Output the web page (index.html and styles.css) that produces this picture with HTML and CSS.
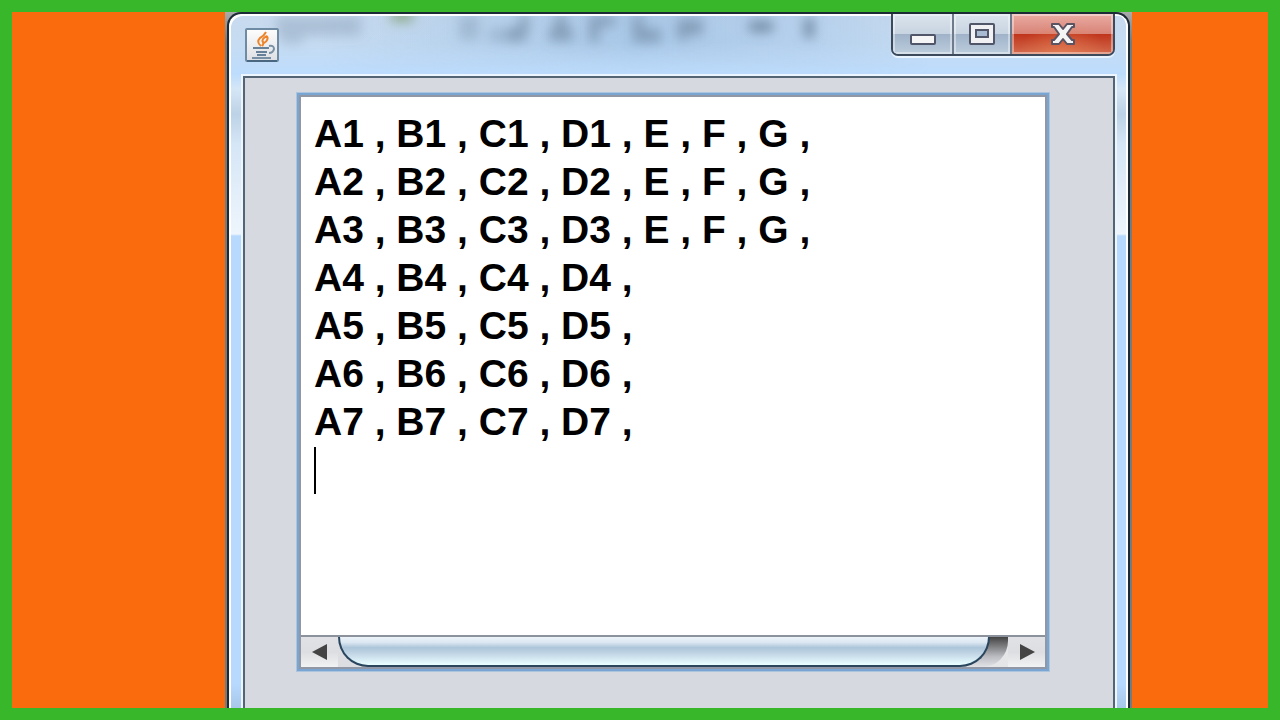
FILE: index.html
```html
<!DOCTYPE html>
<html lang="en">
<head>
<meta charset="utf-8">
<meta name="viewport" content="width=device-width, initial-scale=1">
<title>Text output</title>
<link rel="stylesheet" href="styles.css">
</head>
<body>
<main class="stage">
  <section class="shadow" aria-label="Java window">
    <div class="window">
      <header class="titlebar">
        <svg class="glass" width="640" height="62" viewBox="0 0 640 62" aria-hidden="true">
          <defs><filter id="soft" x="-20%" y="-50%" width="140%" height="200%"><feGaussianBlur stdDeviation="6"/></filter></defs>
          <g filter="url(#soft)" fill="#6a829c">
            <g opacity=".3"><rect x="45" y="0" width="85" height="20"/><rect x="50" y="20" width="22" height="8"/><rect x="228" y="0" width="20" height="24"/><rect x="258" y="12" width="26" height="14"/></g>
            <rect x="160" y="-6" width="22" height="12" fill="#6f9150" opacity=".6"/>
            <g opacity=".6"><rect x="278" y="12" width="18" height="13"/><rect x="288" y="0" width="10" height="14"/><rect x="318" y="12" width="24" height="13"/><rect x="324" y="0" width="12" height="12"/><rect x="358" y="0" width="10" height="26"/><rect x="366" y="0" width="18" height="10"/><rect x="402" y="0" width="10" height="26"/><rect x="410" y="13" width="20" height="13"/><rect x="446" y="3" width="26" height="16"/><rect x="447" y="12" width="9" height="12"/></g>
            <g opacity=".85"><rect x="518" y="5" width="24" height="11"/><rect x="573" y="2" width="10" height="20"/></g>
          </g>
        </svg>
        <svg class="java" width="34" height="34" viewBox="0 0 34 34" role="img" aria-label="Java">
          <defs><linearGradient id="tile" x2="0" y2="1"><stop stop-color="#fdfdfd"/><stop offset="1" stop-color="#dedfe3"/></linearGradient></defs>
          <rect x="1" y="1" width="32" height="32" rx="1" fill="url(#tile)" stroke="#6f8aa3" stroke-width="2"/>
          <path d="M2 33H32" stroke="#496780" stroke-width="2"/>
          <path d="M21 4Q19 8 15 10Q11 14 16 18M22 8Q16 11 18 14Q19 16 17 18M22 8Q24 12 19 15" fill="none" stroke="#ed8429" stroke-width="2"/>
          <path d="M8 20H24M11 24H22M12 27H21" fill="none" stroke="#668199" stroke-width="2"/>
          <path d="M7 30H26M24 18Q29 17 29 21Q28 25 24 25" fill="none" stroke="#7790a6" stroke-width="2"/>
        </svg>
        <div class="controls">
          <button class="control minimize" type="button" aria-label="Minimize"><svg width="26" height="12" viewBox="0 0 26 12"><rect x="1" y="2" width="24" height="9" rx="1" fill="#f5f5f5" stroke="#515668" stroke-width="2"/></svg></button>
          <button class="control maximize" type="button" aria-label="Maximize"><svg width="26" height="22" viewBox="0 0 26 22"><rect x="1" y="1" width="24" height="20" rx="1" fill="#f1f1f3" stroke="#515668" stroke-width="2"/><rect x="7" y="7" width="12" height="7" fill="#a9bbd2" stroke="#515668" stroke-width="2"/></svg></button>
          <button class="control close" type="button" aria-label="Close"><svg width="24" height="22" viewBox="0 0 24 22"><path d="M1 1H8L12 6L16 1H23V4H21L16 11L21 17H23V21H16L12 16L8 21H1V17H3L8 11L3 4H1Z" fill="#f5f4f5" stroke="#5b5361" stroke-width="2" stroke-linejoin="round"/></svg></button>
        </div>
      </header>
      <div class="client">
        <div class="editor">
          <div class="page">
            <textarea class="text" aria-label="Output text" wrap="off" spellcheck="false">A1 , B1 , C1 , D1 , E , F , G ,
A2 , B2 , C2 , D2 , E , F , G ,
A3 , B3 , C3 , D3 , E , F , G ,
A4 , B4 , C4 , D4 ,
A5 , B5 , C5 , D5 ,
A6 , B6 , C6 , D6 ,
A7 , B7 , C7 , D7 ,
</textarea>
            <span class="caret" aria-hidden="true"></span>
          </div>
          <div class="scrollbar">
            <button class="arrow" type="button" aria-label="Scroll left"><svg width="16" height="16" viewBox="0 0 16 16"><path d="M0 8L15 0V16Z" fill="#444"/></svg></button>
            <div class="track"><div class="thumb"></div></div>
            <button class="arrow" type="button" aria-label="Scroll right"><svg width="16" height="16" viewBox="0 0 16 16"><path d="M16 8L1 0V16Z" fill="#444"/></svg></button>
          </div>
        </div>
      </div>
    </div>
  </section>
</main>
</body>
</html>
```
FILE: styles.css
```css
* { box-sizing: border-box; }
body { margin: 0; }
button { padding: 0; border: 0; font: inherit; }
svg { display: block; }
.stage {
  min-height: 100vh;
  display: grid;
  grid-template-columns: 213fr 907fr 136fr;
  border: 12px solid #37b729;
  background: #fa6b0e;
}
.shadow {
  grid-column: 2;
  display: grid;
  padding: 0 2px;
  background: linear-gradient(#aaa, #777b7c 30px);
}
.window {
  display: flex;
  flex-direction: column;
  min-width: 0;
  overflow: hidden;
  padding: 0 13px 0 14px;
  border: 2px solid #1d2b36;
  border-bottom: 0;
  border-radius: 14px 14px 0 0;
  background: linear-gradient(#c8daee, #c6dcf2 30px, #bddcfd 60px, #d5e6f6 75px, #bdd2e6 100px, #d5e6f6 130px, #eef5fc 220px, #b7d9fe 222px, #b7d9fe 670px, #a8c7e8);
  box-shadow: inset 2px 2px #fff, inset -2px 0 #fff;
}
.titlebar {
  position: relative;
  display: flex;
  justify-content: space-between;
  align-items: flex-start;
  height: 62px;
  margin: 0 -13px 0 -12px;
  padding: 0 13px 0 14px;
}
.titlebar::before {
  content: "";
  position: absolute;
  inset: 2px 0 0;
  border-radius: 10px 10px 0 0;
  background: linear-gradient(90deg, transparent 10%, #8eb6df88 45%, #9ec1e766 65%, transparent 78%);
  -webkit-mask: linear-gradient(#000 45%, transparent);
  mask: linear-gradient(#000 45%, transparent);
}
.glass { position: absolute; left: 0; top: 2px; }
.java { position: relative; margin-top: 14px; }
.controls {
  position: relative;
  display: flex;
  height: 42px;
  overflow: hidden;
  border: 2px solid #3d4a5b;
  border-top: 0;
  border-radius: 0 0 7px 7px;
  box-shadow: 0 2px #e7f4ff;
}
.control {
  display: flex;
  justify-content: center;
  width: 61px;
  border-right: 2px solid #6d7b8d;
  background: linear-gradient(#dbe4ed, #c8d4e1 49%, #9fb2c8 50%, #bdcddd);
  box-shadow: inset 0 0 0 2px #ffffff66;
}
.minimize svg { margin-top: 19px; }
.maximize { width: 58px; }
.maximize svg { margin-top: 9px; }
.close svg { margin-top: 9px; }
.close {
  width: 101px;
  border: 0;
  background: radial-gradient(ellipse at bottom, #eb8a5988, transparent 60%), linear-gradient(#eaaca3, #d88478 49%, #bf341b 50%, #d46b4d);
}
.client {
  flex: 1;
  display: flex;
  flex-direction: column;
  padding: 14px 63px 36px 51px;
  border: 2px solid #536575;
  border-bottom: 0;
  background: #d6d9e0;
  box-shadow: 0 0 0 2px #edf6ff;
}
.editor {
  flex: 1;
  display: flex;
  flex-direction: column;
  border: 3px solid #78a5d2;
  outline: 1px solid #adc4df;
  outline-offset: -1px;
  box-shadow: inset 0 0 0 2px #9297a5;
  padding: 2px;
  background: #fff;
}
.page { position: relative; flex: 1; display: grid; }
.text {
  width: 100%;
  min-height: 530px;
  padding: 13px;
  border: 0;
  outline: 0;
  resize: none;
  overflow: hidden;
  background: #fff;
  color: #000;
  font: bold 39px/48px "Liberation Sans", Arial, sans-serif;
  font-kerning: none;
}
.caret {
  position: absolute;
  left: 13px;
  top: 350px;
  width: 2px;
  height: 47px;
  background: #000;
}
.scrollbar {
  display: flex;
  height: 32px;
  border-top: 2px solid #8b929b;
  background: #e4e6e8;
}
.arrow {
  width: 37px;
  display: grid;
  place-items: center;
  background: linear-gradient(#e1e2e5, #dcdee1 50%, #f0f2f3);
}
.track {
  flex: 1;
  display: flex;
  padding-right: 18px;
  border-radius: 0 0 26px 0;
  background: linear-gradient(90deg, #dcdee1 90%, transparent 90%), linear-gradient(#444, #bbbcc2 65%, #e2e3e6);
}
.thumb {
  flex: 1;
  border: 2px solid #2a455e;
  border-top: 0;
  border-radius: 0 0 30px 30px;
  background: linear-gradient(#edf4fa, #dae6f1 20%, #adc5d9 38%, #c2d6e6 60%, #e9ffff);
}
```
